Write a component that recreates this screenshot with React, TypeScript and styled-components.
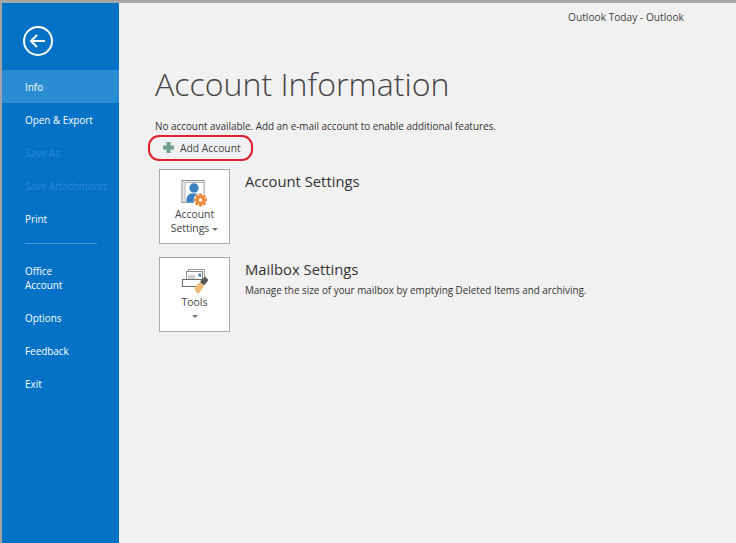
import React from "react";
import styled, { createGlobalStyle } from "styled-components";

const Global = createGlobalStyle`
  html, body { margin: 0; padding: 0; height: 100%; background: #f1f1f1; }
  #root { height: 100%; }
  * { box-sizing: border-box; }
`;

const Window = styled.div`
  width: 736px;
  height: 543px;
  overflow: hidden;
  display: flex;
  background: #f1f1f1;
  border-top: 3px solid #a6a6a6;
  border-left: 2px solid #a3a3a3;
  font-family: "Open Sans", "Noto Sans", "Liberation Sans", sans-serif;
  color: #444;
`;

const Sidebar = styled.nav`
  width: 117px;
  flex: none;
  background: #0272c6;
  display: flex;
  flex-direction: column;
  padding-top: 20px;
`;

const BackButton = styled.div`
  width: 30px;
  height: 30px;
  margin: 3px 0 14px 21px;
  border: 2px solid #fff;
  border-radius: 50%;
  display: flex;
  align-items: center;
  justify-content: center;
`;

const NavItem = styled.div<{ $active?: boolean; $disabled?: boolean }>`
  min-height: 33px;
  padding: 0 0 0 23px;
  display: flex;
  align-items: center;
  font-size: 9.9px;
  line-height: 14px;
  color: ${(p) => (p.$disabled ? "#2b8ad6" : "#fff")};
  background: ${(p) => (p.$active ? "#2a8dd4" : "transparent")};
`;

const TallNavItem = styled(NavItem)`
  min-height: 47px;
`;

const Divider = styled.div`
  height: 1px;
  width: 72px;
  margin: 8px 0 10px 23px;
  background: #3f96d9;
`;

const Main = styled.main`
  flex: 1;
  min-width: 0;
  display: flex;
  flex-direction: column;
`;

const TitleBar = styled.div`
  height: 28px;
  padding: 6px 0 0 449px;
  font-size: 10.2px;
  line-height: 16px;
  color: #444;
  white-space: nowrap;
`;

const Content = styled.div`
  padding: 28px 0 0 36px;
  display: flex;
  flex-direction: column;
`;

const Heading = styled.h1`
  margin: 0;
  height: 60px;
  font-size: 32.1px;
  font-weight: 300;
  line-height: 50px;
  color: #444;
  white-space: nowrap;
`;

const Notice = styled.div`
  font-size: 9.9px;
  line-height: 14px;
  height: 14px;
  color: #333;
  white-space: nowrap;
`;

const AddRow = styled.div`
  margin: 2px 0 0 -7px;
  width: 105px;
  height: 26px;
  border: 2px solid #e0202f;
  border-radius: 11px;
  display: flex;
  align-items: center;
  gap: 6px;
  padding: 0 0 1px 13px;
  font-size: 10.3px;
  color: #444;
  white-space: nowrap;
`;

const Section = styled.section`
  display: flex;
  align-items: flex-start;
  margin: 0 0 13px 4px;
  &:first-of-type { margin-top: 8px; }
`;

const ActionButton = styled.div`
  width: 71px;
  height: 75px;
  flex: none;
  background: #fff;
  border: 1px solid #ababab;
  display: flex;
  flex-direction: column;
  align-items: center;
  padding-top: 9px;
  font-size: 10.4px;
  line-height: 14px;
  color: #444;
  text-align: center;
`;

const IconBox = styled.div`
  height: 28px;
  width: 28px;
`;

const Caret = styled.span`
  display: inline-block;
  width: 0;
  height: 0;
  margin-left: 3px;
  vertical-align: middle;
  border-left: 3px solid transparent;
  border-right: 3px solid transparent;
  border-top: 3px solid #777;
`;

const CaretLine = styled.div`
  height: 14px;
  display: flex;
  align-items: center;
  justify-content: center;
  margin-left: -3px;
`;

const SectionText = styled.div`
  padding: 1px 0 0 15px;
`;

const SectionTitle = styled.h2`
  margin: 0;
  font-size: 14.8px;
  font-weight: 400;
  line-height: 22px;
  color: #333;
  white-space: nowrap;
`;

const SectionDescription = styled.p`
  margin: 4px 0 0;
  font-size: 9.87px;
  line-height: 13px;
  color: #333;
  white-space: nowrap;
`;

const AccountIcon = () => (
  <svg width="28" height="28" viewBox="0 0 28 28">
    <rect x="1" y="1.500" width="22" height="22" fill="#ececec" stroke="#8f8f8f" />
    <rect x="4" y="3.500" width="19" height="20" fill="#fff" stroke="#b5b5b5" />
    <circle cx="13" cy="9" r="4.700" fill="#3a7fc1" />
    <path d="M5.500 23.500v-3c0-3.500 2.500-6 5.500-6h4c3.500 0 5.500 2.500 5.500 6v3z" fill="#3a7fc1" />
    <circle cx="19.500" cy="21" r="7" fill="#fff" />
    <g fill="#ed8a3a">
      <circle cx="19.500" cy="21" r="4.500" />
      <rect x="18" y="14.500" width="3" height="13" />
      <rect x="13" y="19.500" width="13" height="3" />
      <rect x="18" y="14.500" width="3" height="13" transform="rotate(45 19.500 21)" />
      <rect x="18" y="14.500" width="3" height="13" transform="rotate(-45 19.500 21)" />
    </g>
    <circle cx="19.500" cy="21" r="1.800" fill="#fff" />
  </svg>
);

const ToolsIcon = () => (
  <svg width="28" height="28" viewBox="0 0 28 28">
    <rect x="7.500" y="2.500" width="16" height="11" fill="#fff" stroke="#9a9a9a" />
    <rect x="5.500" y="4.500" width="16" height="12" fill="#fff" stroke="#8a8a8a" />
    <rect x="7" y="8" width="7" height="4" fill="#cfcfcf" />
    <rect x="17.500" y="6.500" width="2.500" height="3" fill="#3a7fc1" />
    <rect x="1.500" y="12.500" width="19" height="7" fill="#fff" stroke="#6f6f6f" />
    <path d="M14 20l5-5 4 4-5 7.500c-2.500 0-5-3-4-6.500z" fill="#efbb78" />
    <path d="M19 14.500l5-5 3.500 3.500-4.500 5.500z" fill="#595959" />
  </svg>
);

export default function App() {
  return (
    <>
      <Global />
      <Window>
        <Sidebar>
          <BackButton>
            <svg width="18" height="14" viewBox="0 0 18 14" fill="none" stroke="#fff" strokeWidth="2">
              <path d="M16 7H2M8 1L2 7l6 6" />
            </svg>
          </BackButton>
          <NavItem $active>Info</NavItem>
          <NavItem>Open &amp; Export</NavItem>
          <NavItem $disabled>Save As</NavItem>
          <NavItem $disabled>Save Attachments</NavItem>
          <NavItem>Print</NavItem>
          <Divider />
          <TallNavItem>
            Office
            <br />
            Account
          </TallNavItem>
          <NavItem>Options</NavItem>
          <NavItem>Feedback</NavItem>
          <NavItem>Exit</NavItem>
        </Sidebar>
        <Main>
          <TitleBar>Outlook Today - Outlook</TitleBar>
          <Content>
            <Heading>Account Information</Heading>
            <Notice>No account available. Add an e-mail account to enable additional features.</Notice>
            <AddRow>
              <svg width="11" height="11" viewBox="0 0 11 11">
                <path d="M3.500 0h4v3.500h3.500v4H7.500v3.500h-4V7.500H0v-4h3.500z" fill="#6fa08e" />
              </svg>
              Add Account
            </AddRow>
            <Section>
              <ActionButton>
                <IconBox>
                  <AccountIcon />
                </IconBox>
                <div>Account</div>
                <div>
                  Settings
                  <Caret />
                </div>
              </ActionButton>
              <SectionText>
                <SectionTitle>Account Settings</SectionTitle>
              </SectionText>
            </Section>
            <Section>
              <ActionButton>
                <IconBox>
                  <ToolsIcon />
                </IconBox>
                <div>Tools</div>
                <CaretLine>
                  <Caret />
                </CaretLine>
              </ActionButton>
              <SectionText>
                <SectionTitle>Mailbox Settings</SectionTitle>
                <SectionDescription>
                  Manage the size of your mailbox by emptying Deleted Items and archiving.
                </SectionDescription>
              </SectionText>
            </Section>
          </Content>
        </Main>
      </Window>
    </>
  );
}
